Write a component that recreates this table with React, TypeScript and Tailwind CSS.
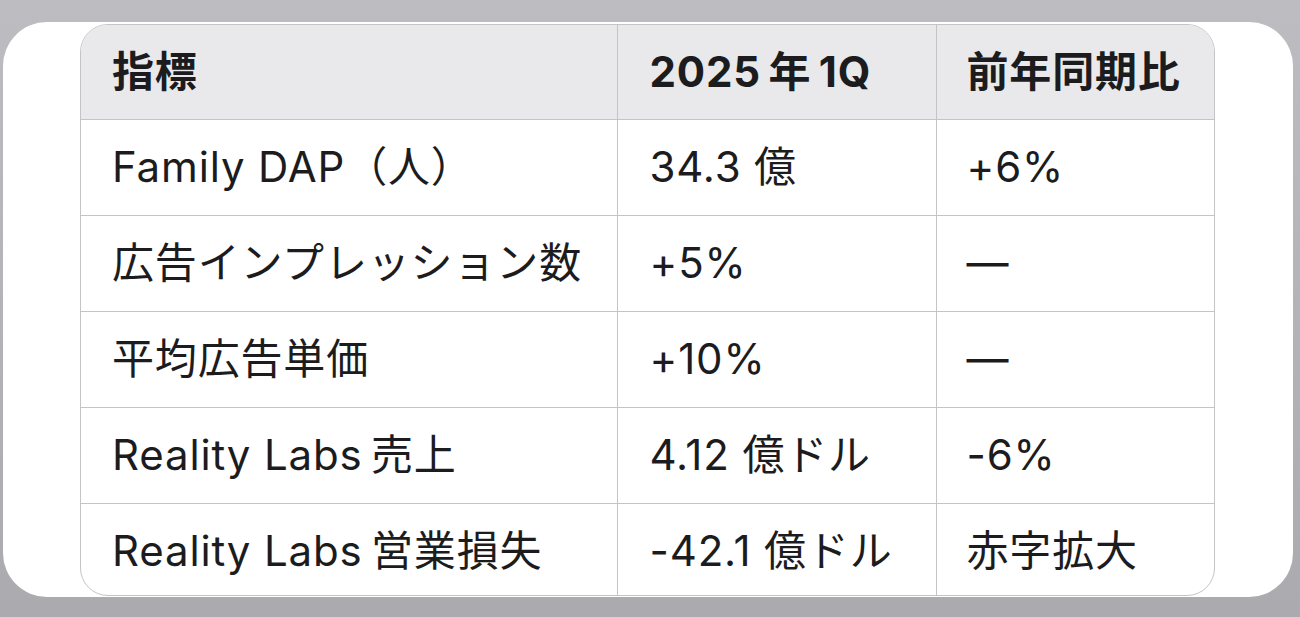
const rows = [
  ["Family DAP（人）", "34.3 億", "+6%"],
  ["広告インプレッション数", "+5%", "—"],
  ["平均広告単価", "+10%", "—"],
  ["Reality Labs\u2009売上", "4.12 億ドル", "-6%"],
  ["Reality Labs\u2009営業損失", "-42.1 億ドル", "赤字拡大"],
];

const line = "border-[#c4c4c6]";

const App = () => {
  return (
    <div
      className="w-[1300px] h-[617px] bg-gradient-to-b from-[#bcbcc1] to-[#aaaaaf] pt-[22px] pl-[3px] overflow-hidden"
      style={{ fontFamily: 'Inter, "Noto Sans CJK JP", sans-serif' }}
    >
      <div className="w-[1290px] h-[575px] bg-white rounded-[44px] pt-[2px] pl-[77px]">
        <div className="w-[1135px] h-[572px] rounded-[28px] border-[1.5px] border-[#c4c4c6] overflow-hidden text-[#1c1c1e] text-[42px] leading-none tracking-[0.02em]">
          <table className="w-full border-collapse table-fixed">
            <colgroup>
              <col className="w-[536px]" />
              <col className="w-[319px]" />
              <col />
            </colgroup>
            <thead>
              <tr className="h-[94px] bg-[#e9e9eb]">
                <th className={`text-left font-bold pl-[31px] border-r-[1.5px] border-b-[1.5px] ${line}`}>指標</th>
                <th className={`text-left font-bold pl-[32px] border-r-[1.5px] border-b-[1.5px] ${line}`}>2025{"\u2009"}年{"\u2009"}1Q</th>
                <th className={`text-left font-bold pl-[30px] border-b-[1.5px] ${line}`}>前年同期比</th>
              </tr>
            </thead>
            <tbody>
              {rows.map((r, i) => {
                const last = i === rows.length - 1;
                return (
                  <tr key={i} className="h-[96px]">
                    <td className={`pl-[31px] border-r-[1.5px] whitespace-nowrap ${line} ${last ? "" : "border-b-[1.5px]"}`}>{r[0]}</td>
                    <td className={`pl-[32px] border-r-[1.5px] whitespace-nowrap ${line} ${last ? "" : "border-b-[1.5px]"}`}>{r[1]}</td>
                    <td className={`pl-[30px] whitespace-nowrap ${line} ${last ? "" : "border-b-[1.5px]"}`}>{r[2]}</td>
                  </tr>
                );
              })}
            </tbody>
          </table>
        </div>
      </div>
    </div>
  );
};

export default App;
